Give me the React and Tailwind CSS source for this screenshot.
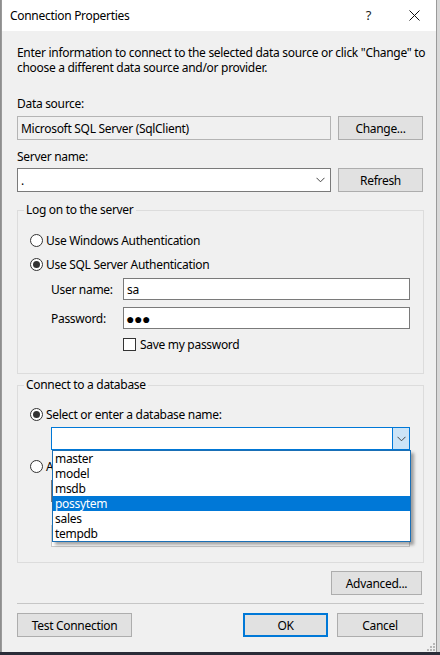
import React from "react";

function Chevron({ className = "" }) {
  return (
    <svg width="9" height="6" viewBox="0 0 9 6" className={className}>
      <path d="M0.5 0.8 L4.5 4.8 L8.5 0.8" fill="none" stroke="#444" strokeWidth="1" />
    </svg>
  );
}

function Radio({ checked }) {
  return (
    <span className="w-[13px] h-[13px] rounded-full border border-[#333] bg-white flex items-center justify-center shrink-0">
      {checked && <span className="w-[7px] h-[7px] rounded-full bg-[#333]" />}
    </span>
  );
}

function Btn({ children, w, className = "" }) {
  return (
    <div
      className={`h-[24px] ${w} bg-[#e1e1e1] border border-[#adadad] flex items-center justify-center shrink-0 ${className}`}
    >
      {children}
    </div>
  );
}

export default function App() {
  return (
    <div className="w-[440px] h-[655px] bg-[#e4e4e4] flex flex-col overflow-hidden font-['Noto_Sans','Liberation_Sans',sans-serif] text-[12px] leading-[15px] tracking-[-0.3px] text-black">
      <div className="flex h-[652px]">
        <div className="w-[1px] bg-[#8e8e8e]" />
        <div className="w-[436px] h-[652px] border-l border-r border-[#9a9a9a] bg-[#f0f0f0] flex flex-col relative">
          {/* title bar */}
          <div className="h-[31px] bg-white flex items-center pl-[8px] shrink-0">
            <span className="text-[12px]">Connection Properties</span>
            <span className="ml-auto mr-[38px] text-[13px] text-[#222]">?</span>
            <svg width="11" height="11" viewBox="0 0 11 11" className="mr-[16px]">
              <path d="M0.5 0.5 L10.5 10.5 M10.5 0.5 L0.5 10.5" stroke="#111" strokeWidth="1" />
            </svg>
          </div>

          {/* body */}
          <div className="pl-[15px] pr-[11px] pt-[14px] flex flex-col">
            <div className="whitespace-nowrap">
              Enter information to connect to the selected data source or click "Change" to
              <br />
              choose a different data source and/or provider.
            </div>

            <div className="mt-[21px]">Data source:</div>
            <div className="mt-[5px] flex gap-[7px]">
              <div className="w-[314px] h-[24px] border border-[#b4b4b4] bg-[#f0f0f0] flex items-center pl-[3px]">
                Microsoft SQL Server (SqlClient)
              </div>
              <Btn w="w-[85px]">Change...</Btn>
            </div>

            <div className="mt-[9px]">Server name:</div>
            <div className="mt-[4px] flex gap-[7px]">
              <div className="w-[314px] h-[24px] border border-[#7a7a7a] bg-white flex items-center pl-[3px] pr-[5px]">
                <span>.</span>
                <Chevron className="ml-auto" />
              </div>
              <Btn w="w-[85px]">Refresh</Btn>
            </div>

            {/* group 1 */}
            <div className="mt-[18px] w-[407px] h-[164px] border border-[#dcdcdc] relative flex flex-col pl-[12px]">
              <span className="absolute left-[6px] top-[-9px] bg-[#f0f0f0] px-[2px]">Log on to the server</span>
              <div className="mt-[22px] flex items-center gap-[3px]">
                <Radio />
                <span>Use Windows Authentication</span>
              </div>
              <div className="mt-[9px] flex items-center gap-[3px]">
                <Radio checked />
                <span>Use SQL Server Authentication</span>
              </div>
              <div className="mt-[6px] flex items-center pl-[21px]">
                <span className="w-[72px]">User name:</span>
                <div className="w-[287px] h-[22px] border border-[#7a7a7a] bg-white flex items-center pl-[3px]">sa</div>
              </div>
              <div className="mt-[7px] flex items-center pl-[21px]">
                <span className="w-[72px]">Password:</span>
                <div className="w-[287px] h-[22px] border border-[#7a7a7a] bg-white flex items-center pl-[2px] text-[14px] tracking-[-0.5px]">
                  ●●●
                </div>
              </div>
              <div className="mt-[8px] flex items-center pl-[93px] gap-[4px]">
                <span className="w-[13px] h-[13px] border border-[#333] bg-white" />
                <span>Save my password</span>
              </div>
            </div>

            {/* group 2 */}
            <div className="mt-[11px] w-[407px] h-[178px] border border-[#dcdcdc] relative flex flex-col pl-[12px]">
              <span className="absolute left-[6px] top-[-9px] bg-[#f0f0f0] px-[2px]">Connect to a database</span>
              <div className="mt-[21px] flex items-center gap-[3px]">
                <Radio checked />
                <span>Select or enter a database name:</span>
              </div>
              <div className="mt-[5px] ml-[21px] w-[359px] h-[23px] border border-[#0078d7] bg-white flex">
                <div className="ml-auto w-[17px] h-full bg-[#cce4f7] border-l border-[#0078d7] flex items-center justify-center">
                  <Chevron />
                </div>
              </div>
              <div className="mt-[9px] flex items-center gap-[3px]">
                <Radio />
                <span>Attach a database file:</span>
              </div>
              <div className="mt-[6px] ml-[21px] flex gap-[7px]">
                <div className="w-[280px] h-[22px] border border-[#7a7a7a] bg-white" />
                <div className="w-[72px] h-[22px] bg-[#e1e1e1] border border-[#adadad]" />
              </div>
              <div className="mt-[23px] ml-[21px] w-[359px] h-[22px] border border-[#c8c8c8] bg-white" />
            </div>

            <div className="mt-[8px] flex justify-end pr-[3px]">
              <Btn w="w-[91px]">Advanced...</Btn>
            </div>

            <div className="mt-[8px] w-[407px] h-[1px] bg-[#c6c6c6]" />

            <div className="mt-[9px] flex">
              <Btn w="w-[115px]">Test Connection</Btn>
              <div className="ml-[111px] w-[85px] h-[24px] bg-[#e1e1e1] border-2 border-[#0078d7] flex items-center justify-center">
                OK
              </div>
              <Btn w="w-[86px]" className="ml-[9px]">Cancel</Btn>
            </div>
          </div>

          {/* resize grip */}
          <svg width="8" height="8" viewBox="0 0 8 8" className="absolute right-[1px] bottom-[1px]">
            <rect x="6" y="0" width="2" height="2" fill="#b8b8b8" />
            <rect x="3" y="3" width="2" height="2" fill="#b8b8b8" />
            <rect x="6" y="3" width="2" height="2" fill="#b8b8b8" />
            <rect x="0" y="6" width="2" height="2" fill="#b8b8b8" />
            <rect x="3" y="6" width="2" height="2" fill="#b8b8b8" />
            <rect x="6" y="6" width="2" height="2" fill="#b8b8b8" />
          </svg>

          {/* open dropdown list (overlay) */}
          <div className="absolute left-[50px] top-[450px] w-[359px] border border-[#1a6fb5] bg-white shadow-[3px_3px_3px_rgba(0,0,0,0.35)] flex flex-col">
            {["master", "model", "msdb", "possytem", "sales", "tempdb"].map((n) => (
              <div
                key={n}
                className={
                  n === "possytem"
                    ? "h-[15px] leading-[15px] pl-[2px] bg-[#0078d7] text-white"
                    : "h-[15px] leading-[15px] pl-[2px]"
                }
              >
                {n}
              </div>
            ))}
          </div>
        </div>
        <div className="flex-1 bg-[#d8d8d8]" />
      </div>
      <div className="h-[3px] bg-[#2a2c38]" />
    </div>
  );
}
